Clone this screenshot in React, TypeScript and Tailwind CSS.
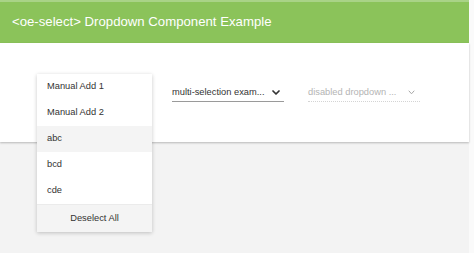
const OPTIONS = ["Manual Add 1", "Manual Add 2", "abc", "bcd", "cde"];

const Chevron = ({ disabled }: { disabled?: boolean }) => (
  <svg
    width={disabled ? 7 : 8}
    height={5}
    viewBox={disabled ? "0 0 7 5" : "0 0 8 5"}
    fill="none"
    stroke="currentColor"
    strokeWidth={disabled ? 1 : 1.7}
    strokeLinecap="round"
    strokeLinejoin="round"
  >
    <polyline points={disabled ? "1,1 3.5,3.8 6,1" : "1,1 4,4 7,1"} />
  </svg>
);

const Select = ({ label, disabled }: { label: string; disabled?: boolean }) => (
  <div
    className={`flex h-[15px] w-[112px] items-start justify-between ${
      disabled ? "border-b border-dotted border-[#d4d4d4] text-[#b4b4b4]" : "border-b border-[#9a9a9a] text-[#333]"
    }`}
  >
    <span className="whitespace-nowrap leading-[11px]">{label}</span>
    <span className={`pt-[3px] ${disabled ? "mr-[5px] text-[#a8a8a8]" : "mr-[4px]"}`}>
      <Chevron disabled={disabled} />
    </span>
  </div>
);

export default function App() {
  return (
    <div className="flex h-[253px] w-[474px] bg-[#f3f3f3] font-['Liberation_Sans',Arial,sans-serif]">
      <div className="flex w-[469px] flex-col">
        <header className="h-[43px] border-t-2 border-[#a9d387] bg-[#8bc35a] pl-[12px] text-[13.2px] leading-[40px] text-white">
          &lt;oe-select&gt; Dropdown Component Example
        </header>
        <main className="relative h-[99px] bg-white text-[9.3px] shadow-[0_1px_2px_rgba(0,0,0,0.25)]">
          <div className="flex gap-[24px] pl-[37px] pt-[44px]">
            <div className="w-[111px]" />
            <Select label="multi-selection exam..." />
            <Select label="disabled dropdown ..." disabled />
          </div>
          <ul className="absolute left-[37px] top-[31px] w-[115px] bg-white text-[#333] shadow-[0_1px_4px_rgba(0,0,0,0.22)]">
            {OPTIONS.map((o) => (
              <li
                key={o}
                className={`flex h-[26px] items-center pl-[10px] ${o === "abc" ? "bg-[#f4f4f4]" : ""}`}
              >
                {o}
              </li>
            ))}
            <li className="flex h-[28px] items-center justify-center border-t border-[#ebebeb] bg-[#f4f4f4]">
              Deselect All
            </li>
          </ul>
        </main>
      </div>
      <div className="flex-1 bg-[#fafafa]" />
    </div>
  );
}
